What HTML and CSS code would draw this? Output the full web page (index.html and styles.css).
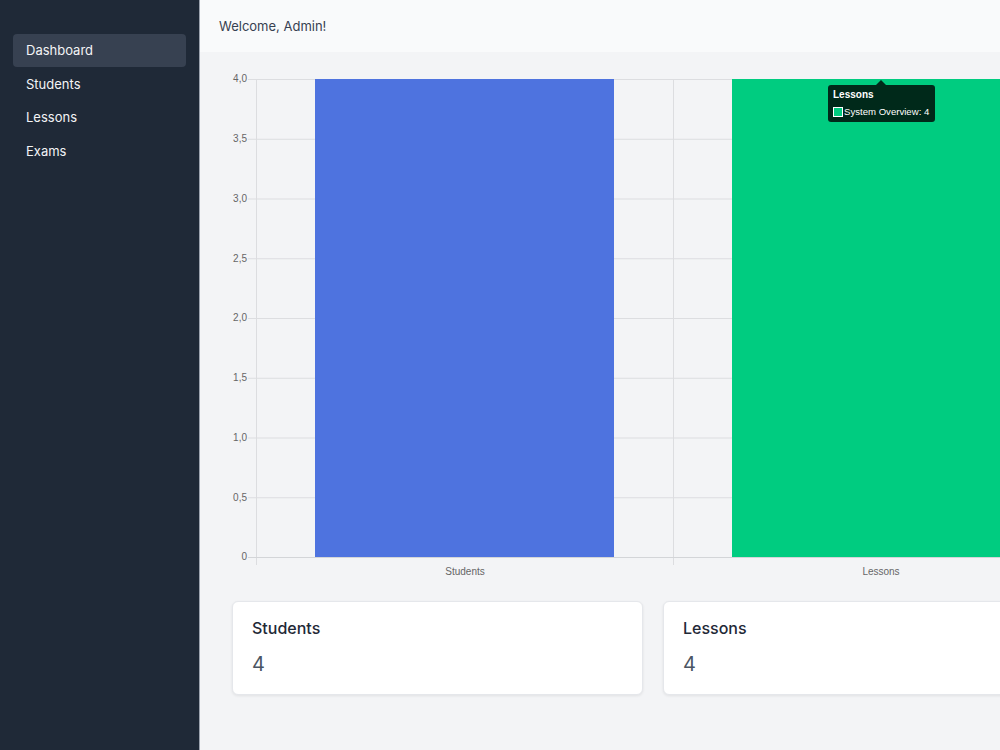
FILE: index.html
```html
<!DOCTYPE html>
<html lang="en">
<head>
  <meta charset="UTF-8" />
  <title>Dashboard</title>
  <link rel="stylesheet" href="styles.css">
</head>
<body>
  <aside class="sidebar">
    <a class="nav-item active" href="#">Dashboard</a>
    <a class="nav-item" href="#">Students</a>
    <a class="nav-item" href="#">Lessons</a>
    <a class="nav-item" href="#">Exams</a>
  </aside>

  <div class="main">
    <header class="topbar">Welcome, Admin!</header>

    <div class="content">
      <svg class="chart" width="860" height="516" viewBox="0 0 860 516">
        <g class="grid">
          <line x1="16" y1="7.5" x2="858" y2="7.5"/>
          <line x1="16" y1="67.25" x2="858" y2="67.25"/>
          <line x1="16" y1="127" x2="858" y2="127"/>
          <line x1="16" y1="186.75" x2="858" y2="186.75"/>
          <line x1="16" y1="246.5" x2="858" y2="246.5"/>
          <line x1="16" y1="306.25" x2="858" y2="306.25"/>
          <line x1="16" y1="366" x2="858" y2="366"/>
          <line x1="16" y1="425.75" x2="858" y2="425.75"/>
          <line x1="24.5" y1="7" x2="24.5" y2="493"/>
          <line x1="441.5" y1="7" x2="441.5" y2="493"/>
          <line x1="857.5" y1="7" x2="857.5" y2="493"/>
        </g>

        <rect x="83" y="7" width="299" height="478" fill="#4e73df"/>
        <rect x="500" y="7" width="299" height="478" fill="#00cc80"/>

        <line class="axis" x1="16" y1="485.5" x2="858" y2="485.5"/>

        <g class="ylabels">
          <text x="15" y="7">4,0</text>
          <text x="15" y="67">3,5</text>
          <text x="15" y="127">3,0</text>
          <text x="15" y="187">2,5</text>
          <text x="15" y="246">2,0</text>
          <text x="15" y="306">1,5</text>
          <text x="15" y="366">1,0</text>
          <text x="15" y="426">0,5</text>
          <text x="15" y="485">0</text>
        </g>

        <g class="xlabels">
          <text x="233" y="500">Students</text>
          <text x="649" y="500">Lessons</text>
        </g>

        <!-- tooltip on the Lessons bar -->
        <g class="tooltip">
          <path d="M644 13 L649 8 L654 13 Z"/>
          <rect x="596" y="13" width="107" height="37" rx="3"/>
          <text class="tip-title" x="601" y="23">Lessons</text>
          <rect class="tip-swatch" x="601.5" y="35.5" width="9" height="9"/>
          <text class="tip-body" x="612" y="40">System Overview: 4</text>
        </g>
      </svg>

      <div class="stats">
        <div class="stat-card">
          <h3>Students</h3>
          <p class="stat-value">4</p>
        </div>
        <div class="stat-card">
          <h3>Lessons</h3>
          <p class="stat-value">4</p>
        </div>
      </div>
    </div>
  </div>
</body>
</html>
```

FILE: styles.css
```css
body {
  margin: 0;
  font-family: 'Inter', sans-serif;
  background-color: #f3f4f6;
  display: flex;
  min-height: 100vh;
  overflow: hidden;
}

.sidebar {
  width: 200px;
  flex-shrink: 0;
  background-color: #1f2937;
  border-right: 1px solid #9ca3af;
  box-sizing: border-box;
  padding: 34px 13px;
  display: flex;
  flex-direction: column;
  gap: 0.5px;
}

.nav-item {
  display: block;
  color: #f3f4f6;
  text-decoration: none;
  font-size: 13px;
  line-height: 17px;
  padding: 8px 13px;
  border-radius: 4px;
}

.nav-item.active {
  background-color: #374151;
}

.main {
  flex: 1;
  min-width: 0;
}

.topbar {
  background-color: #f9fafb;
  height: 52px;
  display: flex;
  align-items: center;
  padding-left: 19px;
  font-size: 13px;
  color: #374151;
}

.content {
  width: 842px;
  padding: 20px 32px 0 32px;
}

.chart {
  display: block;
  font-family: 'Liberation Sans', Arial, sans-serif;
  font-size: 10px;
}

.chart .grid line {
  stroke: #dcdde0;
  stroke-width: 1;
}

.chart .axis {
  stroke: #d3d5d8;
  stroke-width: 1;
}

.chart .ylabels text {
  fill: #666666;
  text-anchor: end;
  dominant-baseline: middle;
}

.chart .xlabels text {
  fill: #666666;
  text-anchor: middle;
  dominant-baseline: middle;
}

.tooltip path,
.tooltip rect {
  fill: rgba(0, 0, 0, 0.8);
}

.tooltip text {
  fill: #ffffff;
  dominant-baseline: middle;
}

.tooltip .tip-title {
  font-weight: 700;
}

.tooltip .tip-body {
  font-size: 9.6px;
}

.tooltip .tip-swatch {
  fill: #00cc80;
  stroke: #ffffff;
  stroke-width: 1;
}

.stats {
  display: grid;
  grid-template-columns: 411px 411px;
  gap: 20px;
  margin-top: 13px;
}

.stat-card {
  background-color: #ffffff;
  border: 1px solid #e5e7eb;
  border-radius: 6px;
  box-shadow: 0 1px 3px rgba(0, 0, 0, 0.08);
  padding: 14px 19px 16px 19px;
}

.stat-card h3 {
  margin: 0;
  font-size: 16px;
  font-weight: 500;
  line-height: 24px;
  color: #1f2937;
}

.stat-card .stat-value {
  margin: 10px 0 0 0;
  font-size: 20px;
  line-height: 28px;
  color: #4b5563;
}
```
